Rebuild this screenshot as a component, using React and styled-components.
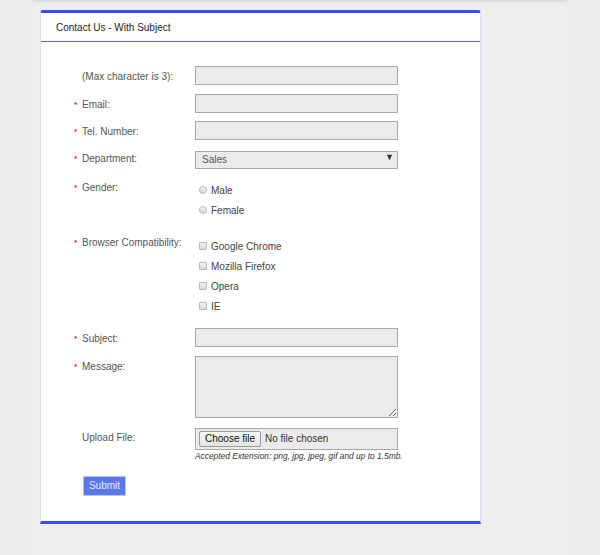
import styled, { createGlobalStyle } from "styled-components";

const GlobalStyle = createGlobalStyle`
  html, body {
    margin: 0;
    padding: 0;
    background: #ebebeb;
    font-family: "Liberation Sans", Arial, sans-serif;
  }
`;

const Column = styled.div`
  margin-left: 33px;
  width: 534px;
  min-height: 555px;
  background: #eeeeee;
  box-shadow: inset 0 3px 3px -2px rgba(0, 0, 0, 0.12);
  padding: 10px 0 0 7px;
  box-sizing: border-box;
`;

const Card = styled.div`
  width: 441px;
  box-sizing: border-box;
  background: #fff;
  border: 1px solid #dde0f2;
  border-top: 3px solid #3b4bff;
  border-bottom: 3px solid #3b4bff;
  border-radius: 3px 3px 0 0;
`;

const Header = styled.div`
  height: 29px;
  box-sizing: border-box;
  border-bottom: 1px solid #5062ff;
  padding-left: 15px;
  display: flex;
  align-items: center;
  font-size: 10px;
  color: #1c1c2a;
`;

const Form = styled.form`
  display: flex;
  flex-direction: column;
  padding: 24px 0 25px 33px;
`;

const Row = styled.div`
  display: grid;
  grid-template-columns: 121px 203px;
  align-items: start;
  margin-bottom: ${(p) => p.$mb ?? 9}px;
`;

const Label = styled.label`
  display: flex;
  align-items: center;
  padding-top: ${(p) => p.$pt ?? 4}px;
  line-height: 13px;
  font-size: 10px;
  color: #555;
`;

const Star = styled.span`
  width: 8px;
  color: #e8102a;
  font-size: 8px;
  font-weight: bold;
  line-height: 8px;
  align-self: flex-start;
  margin-top: 3px;
`;

const TextInput = styled.input`
  width: 203px;
  height: ${(p) => p.$h ?? 19}px;
  box-sizing: border-box;
  margin: 0;
  background: #ebebeb;
  border: 1px solid #a8a8a8;
  outline: none;
`;

const TextArea = styled.textarea`
  width: 203px;
  height: 62px;
  box-sizing: border-box;
  margin: 0;
  background: #ebebeb;
  border: 1px solid #a8a8a8;
  outline: none;
  resize: both;
`;

const SelectWrap = styled.div`
  position: relative;
  width: 203px;
  height: 18px;
`;

const Select = styled.select`
  appearance: none;
  width: 100%;
  height: 100%;
  box-sizing: border-box;
  margin: 0;
  padding: 0 0 0 6px;
  background: #ebebeb;
  border: 1px solid #a8a8a8;
  font-family: inherit;
  font-size: 10px;
  color: #555;
  outline: none;
`;

const Arrow = styled.span`
  position: absolute;
  right: 4px;
  top: 3px;
  font-size: 9px;
  color: #333;
  pointer-events: none;
`;

const Group = styled.div`
  display: flex;
  flex-direction: column;
  padding-top: ${(p) => p.$pt ?? 3}px;
`;

const Option = styled.label`
  height: 20px;
  display: flex;
  align-items: center;
  gap: 4px;
  padding-left: 4px;
  font-size: 10px;
  color: #444;
`;

const Mark = styled.span`
  width: 8px;
  height: 8px;
  box-sizing: border-box;
  border: 1px solid #b9b9b9;
  border-radius: ${(p) => (p.$round ? "50%" : "1px")};
  background: linear-gradient(#f4f4f4, #d9d9d9);
`;

const FileBox = styled.div`
  width: 203px;
  height: 22px;
  box-sizing: border-box;
  background: #ebebeb;
  border: 1px solid #a8a8a8;
  display: flex;
  align-items: center;
  gap: 4px;
  padding-left: 3px;
  font-size: 10px;
  color: #333;
`;

const FileButton = styled.span`
  height: 16px;
  box-sizing: border-box;
  padding: 0 5px;
  display: flex;
  align-items: center;
  background: linear-gradient(#f6f6f6, #e4e4e4);
  border: 1px solid #9a9a9a;
  border-radius: 2px;
  color: #111;
`;

const Hint = styled.div`
  margin-top: 1px;
  font-size: 8.4px;
  font-style: italic;
  color: #333;
  white-space: nowrap;
`;

const Submit = styled.button`
  margin: 15px 0 0 9px;
  width: 43px;
  height: 20px;
  padding: 0;
  background: #5a78ee;
  border: 1px solid #bcc4e6;
  color: #e6e9ff;
  font-family: inherit;
  font-size: 10px;
`;

const browsers = ["Google Chrome", "Mozilla Firefox", "Opera", "IE"];

export default function App() {
  return (
    <>
      <GlobalStyle />
      <Column>
        <Card>
          <Header>Contact Us - With Subject</Header>
          <Form onSubmit={(e) => e.preventDefault()}>
            <Row>
              <Label>
                <Star />
                (Max character is 3):
              </Label>
              <TextInput maxLength={3} />
            </Row>
            <Row $mb={8}>
              <Label>
                <Star>*</Star>Email:
              </Label>
              <TextInput />
            </Row>
            <Row>
              <Label>
                <Star>*</Star>Tel. Number:
              </Label>
              <TextInput />
            </Row>
            <Row $mb={10}>
              <Label $pt={3}>
                <Star>*</Star>Department:
              </Label>
              <SelectWrap>
                <Select defaultValue="Sales">
                  <option>Sales</option>
                  <option>Support</option>
                  <option>Marketing</option>
                </Select>
                <Arrow>▼</Arrow>
              </SelectWrap>
            </Row>
            <Row $mb={12}>
              <Label>
                <Star>*</Star>Gender:
              </Label>
              <Group>
                <Option>
                  <Mark $round />
                  Male
                </Option>
                <Option>
                  <Mark $round />
                  Female
                </Option>
              </Group>
            </Row>
            <Row $mb={11.5}>
              <Label>
                <Star>*</Star>Browser Compatibility:
              </Label>
              <Group $pt={4}>
                {browsers.map((b) => (
                  <Option key={b}>
                    <Mark />
                    {b}
                  </Option>
                ))}
              </Group>
            </Row>
            <Row>
              <Label>
                <Star>*</Star>Subject:
              </Label>
              <TextInput />
            </Row>
            <Row $mb={10}>
              <Label>
                <Star>*</Star>Message:
              </Label>
              <TextArea />
            </Row>
            <Row $mb={0}>
              <Label $pt={3}>
                <Star />
                Upload File:
              </Label>
              <div>
                <FileBox>
                  <FileButton>Choose file</FileButton>
                  No file chosen
                </FileBox>
                <Hint>
                  Accepted Extension: png, jpg, jpeg, gif and up to 1.5mb.
                </Hint>
              </div>
            </Row>
            <div>
              <Submit type="submit">Submit</Submit>
            </div>
          </Form>
        </Card>
      </Column>
    </>
  );
}
